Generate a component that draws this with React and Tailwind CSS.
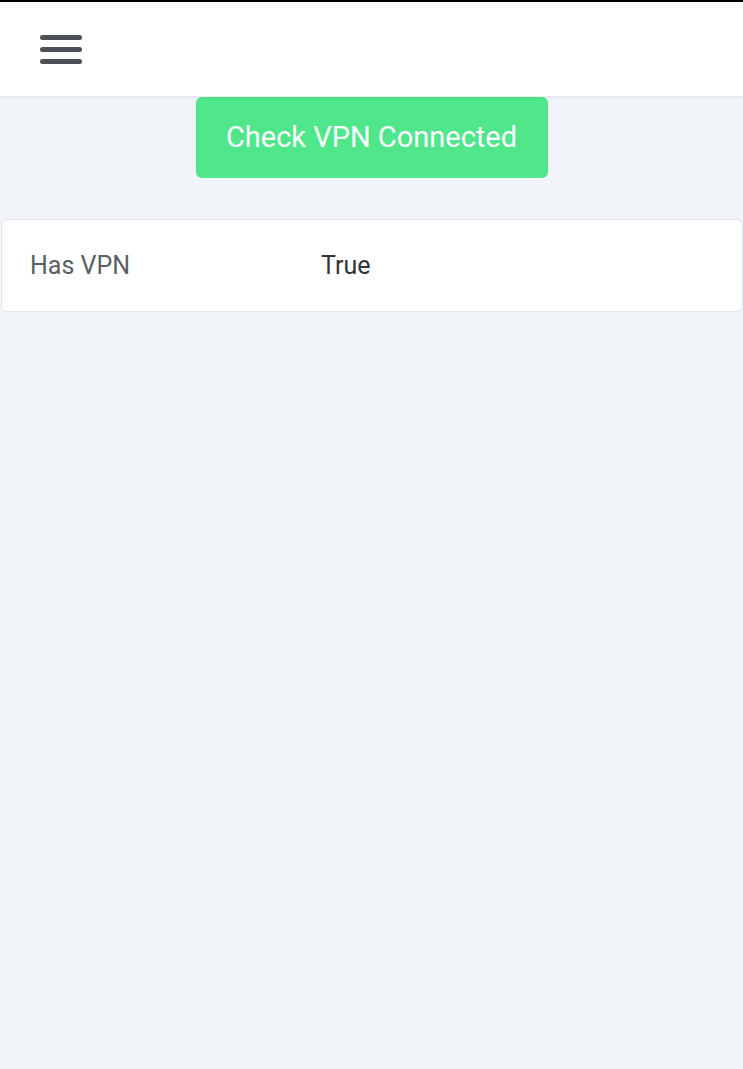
export default function App() {
  return (
    <div className="min-h-[1069px] bg-[#f1f4f8] border-t-2 border-black" style={{ fontFamily: 'Roboto, "Noto Sans", sans-serif' }}>
      {/* Header */}
      <header className="relative z-10 h-[94px] bg-white flex items-center px-10 shadow-[0_1px_4px_rgba(0,0,0,0.08)]">
        <button className="flex flex-col gap-[7px]">
          <span className="block w-[42px] h-[5px] rounded-full bg-[#4b5157]" />
          <span className="block w-[42px] h-[5px] rounded-full bg-[#4b5157]" />
          <span className="block w-[42px] h-[5px] rounded-full bg-[#4b5157]" />
        </button>
      </header>

      <div className="flex justify-center mt-px">
        <button className="w-[352px] h-[81px] rounded-md bg-[#50e68b] text-white text-[29px]">
          Check VPN Connected
        </button>
      </div>

      <div className="mt-[41px] ml-px h-[93px] bg-white border border-[#e1e4e8] rounded-md flex items-center text-[25px]">
        <div className="w-[319px] pl-7 text-[#5b6066]">Has VPN</div>
        <div className="text-[#323437]">True</div>
      </div>
    </div>
  )
}
